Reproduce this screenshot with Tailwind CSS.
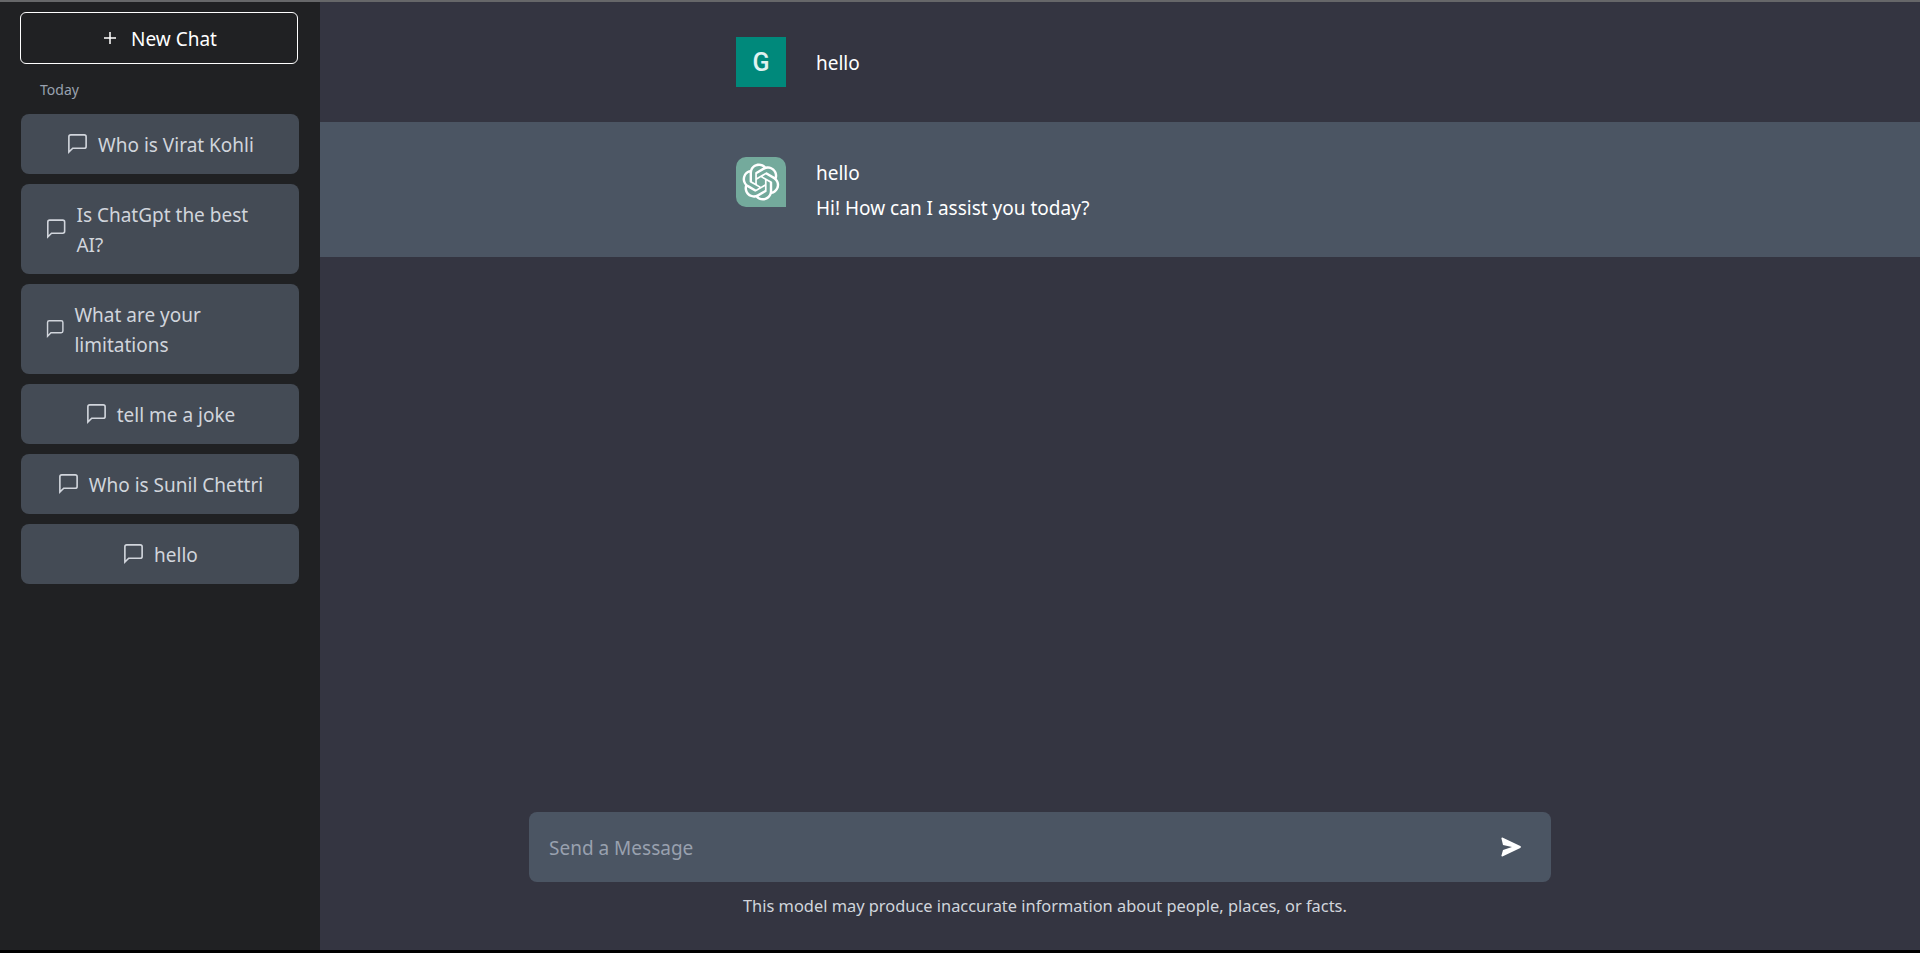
<!DOCTYPE html>
<html lang="en">
<head>
  <meta charset="UTF-8" />
  <meta name="viewport" content="width=device-width, initial-scale=1.0" />
  <title>ChatGPT Clone</title>
  <script src="https://cdn.jsdelivr.net/npm/@tailwindcss/browser@4"></script>
</head>
<body class="h-screen overflow-hidden flex flex-col bg-black font-['Noto_Sans',sans-serif] text-white">
  <div class="h-[2px] bg-[#666769]"></div>
  <div class="h-[948px] flex">
    <!-- sidebar -->
    <aside class="w-[320px] bg-[#202123] pt-[10px] pl-[20px]">
      <button class="w-[278px] h-[52px] flex items-center justify-center gap-[12px] border border-white rounded-md text-[19px]">
        <svg class="w-[18px] h-[18px]" viewBox="0 0 24 24" fill="none" stroke="currentColor" stroke-width="2"><path d="M12 4v16M4 12h16"/></svg>
        <span class="pt-[2px]">New Chat</span>
      </button>
      <p class="mt-[16px] ml-[20px] h-[20px] text-sm leading-5 text-gray-400">Today</p>
      <ul class="mt-[14px] ml-[1px] w-[278px] flex flex-col gap-[10px] text-[19px] leading-[30px] text-gray-300">
        <li class="flex items-center justify-center gap-[9px] px-[24px] pt-[16px] pb-[14px] rounded-lg bg-[#444b55]">
          <svg class="w-[23px] h-[23px] -mt-[4px]" viewBox="0 0 24 24" fill="none" stroke="currentColor" stroke-width="1.7"><path d="M21 15a2 2 0 0 1-2 2H7l-4 4V5a2 2 0 0 1 2-2h14a2 2 0 0 1 2 2z"/></svg>
          <span>Who is Virat Kohli</span>
        </li>
        <li class="flex items-center justify-center gap-[9px] px-[24px] pt-[16px] pb-[14px] rounded-lg bg-[#444b55]">
          <svg class="w-[23px] h-[23px] -mt-[4px]" viewBox="0 0 24 24" fill="none" stroke="currentColor" stroke-width="1.7"><path d="M21 15a2 2 0 0 1-2 2H7l-4 4V5a2 2 0 0 1 2-2h14a2 2 0 0 1 2 2z"/></svg>
          <span>Is ChatGpt the best AI?</span>
        </li>
        <li class="flex items-center justify-center gap-[9px] px-[24px] pt-[16px] pb-[14px] rounded-lg bg-[#444b55]">
          <svg class="w-[23px] h-[23px] -mt-[4px]" viewBox="0 0 24 24" fill="none" stroke="currentColor" stroke-width="1.7"><path d="M21 15a2 2 0 0 1-2 2H7l-4 4V5a2 2 0 0 1 2-2h14a2 2 0 0 1 2 2z"/></svg>
          <span>What are your limitations</span>
        </li>
        <li class="flex items-center justify-center gap-[9px] px-[24px] pt-[16px] pb-[14px] rounded-lg bg-[#444b55]">
          <svg class="w-[23px] h-[23px] -mt-[4px]" viewBox="0 0 24 24" fill="none" stroke="currentColor" stroke-width="1.7"><path d="M21 15a2 2 0 0 1-2 2H7l-4 4V5a2 2 0 0 1 2-2h14a2 2 0 0 1 2 2z"/></svg>
          <span>tell me a joke</span>
        </li>
        <li class="flex items-center justify-center gap-[9px] px-[24px] pt-[16px] pb-[14px] rounded-lg bg-[#444b55]">
          <svg class="w-[23px] h-[23px] -mt-[4px]" viewBox="0 0 24 24" fill="none" stroke="currentColor" stroke-width="1.7"><path d="M21 15a2 2 0 0 1-2 2H7l-4 4V5a2 2 0 0 1 2-2h14a2 2 0 0 1 2 2z"/></svg>
          <span>Who is Sunil Chettri</span>
        </li>
        <li class="flex items-center justify-center gap-[9px] px-[24px] pt-[16px] pb-[14px] rounded-lg bg-[#444b55]">
          <svg class="w-[23px] h-[23px] -mt-[4px]" viewBox="0 0 24 24" fill="none" stroke="currentColor" stroke-width="1.7"><path d="M21 15a2 2 0 0 1-2 2H7l-4 4V5a2 2 0 0 1 2-2h14a2 2 0 0 1 2 2z"/></svg>
          <span>hello</span>
        </li>
      </ul>
    </aside>

    <!-- chat -->
    <main class="flex-1 flex flex-col bg-[#343541]">
      <div class="flex-1 text-[19px] leading-[35px]">
        <div class="h-[120px] pt-[35px] pl-[416px] flex gap-[30px]">
          <div class="w-[50px] h-[50px] flex items-center justify-center bg-[#00897b] font-['Roboto',sans-serif] font-medium text-[25px] text-[#e0f2f1]">G</div>
          <p class="pt-[9px]">hello</p>
        </div>
        <div class="h-[135px] pt-[34px] pl-[416px] flex gap-[30px] bg-[#4b5563]">
          <div class="mt-[1px] w-[50px] h-[50px] flex items-center justify-center bg-[#74aa9c] rounded-l-[10px] rounded-tr-[10px]">
            <svg class="w-[38px] h-[38px]" viewBox="0 0 41 41" fill="#fff"><path d="M37.5324 16.8707C37.9808 15.5241 38.1363 14.0974 37.9886 12.6859C37.8409 11.2744 37.3934 9.91076 36.676 8.68622C35.6126 6.83404 33.9882 5.3676 32.0373 4.4985C30.0864 3.62941 27.9098 3.40259 25.8215 3.85078C24.8796 2.7893 23.7219 1.94125 22.4257 1.36341C21.1295 0.785575 19.7249 0.491269 18.3058 0.500197C16.1708 0.495044 14.0893 1.16803 12.3614 2.42214C10.6335 3.67624 9.34853 5.44666 8.6917 7.47815C7.30085 7.76286 5.98686 8.3414 4.8377 9.17505C3.68854 10.0087 2.73073 11.0782 2.02839 12.312C0.956464 14.1591 0.498905 16.2988 0.721698 18.4228C0.944492 20.5467 1.83612 22.5449 3.268 24.1293C2.81966 25.4759 2.66413 26.9026 2.81182 28.3141C2.95951 29.7256 3.40701 31.0892 4.12437 32.3138C5.18791 34.1659 6.8123 35.6322 8.76321 36.5013C10.7141 37.3704 12.8907 37.5973 14.9789 37.1492C15.9208 38.2107 17.0786 39.0587 18.3747 39.6366C19.6709 40.2144 21.0755 40.5087 22.4946 40.4998C24.6307 40.5054 26.7133 39.8321 28.4418 38.5772C30.1704 37.3223 31.4556 35.5506 32.1119 33.5179C33.5027 33.2332 34.8167 32.6547 35.9659 31.821C37.115 30.9874 38.0728 29.9178 38.7752 28.684C39.8458 26.8371 40.3023 24.6979 40.0789 22.5748C39.8556 20.4517 38.9639 18.4544 37.5324 16.8707ZM22.4978 37.8849C20.7443 37.8874 19.0459 37.2733 17.6994 36.1501C17.7601 36.117 17.8666 36.0586 17.936 36.0161L25.9004 31.4156C26.1003 31.3019 26.2663 31.137 26.3813 30.9378C26.4964 30.7386 26.5563 30.5124 26.5549 30.2825V19.0542L29.9213 20.998C29.9389 21.0068 29.9541 21.0198 29.9656 21.0359C29.977 21.052 29.9842 21.0707 29.9867 21.0902V30.3889C29.9842 32.375 29.1946 34.2791 27.7909 35.6841C26.3872 37.0892 24.4838 37.8806 22.4978 37.8849ZM6.39227 31.0064C5.51397 29.4888 5.19742 27.7107 5.49804 25.9832C5.55718 26.0187 5.66048 26.0818 5.73461 26.1244L13.699 30.7248C13.8975 30.8408 14.1233 30.902 14.3532 30.902C14.583 30.902 14.8088 30.8408 15.0073 30.7248L24.731 25.1103V28.9979C24.7321 29.0177 24.7283 29.0376 24.7199 29.0556C24.7115 29.0736 24.6988 29.0893 24.6829 29.1012L16.6317 33.7497C14.9096 34.7416 12.8643 35.0097 10.9447 34.4954C9.02506 33.9811 7.38785 32.7263 6.39227 31.0064ZM4.29707 13.6194C5.17156 12.0998 6.55279 10.9364 8.19885 10.3327C8.19885 10.4013 8.19491 10.5228 8.19491 10.6071V19.808C8.19351 20.0378 8.25334 20.2638 8.36823 20.4629C8.48312 20.6619 8.64893 20.8267 8.84863 20.9404L18.5723 26.5542L15.206 28.4979C15.1894 28.5089 15.1703 28.5155 15.1505 28.5173C15.1307 28.5191 15.1107 28.516 15.0924 28.5082L7.04046 23.8557C5.32135 22.8601 4.06716 21.2235 3.55289 19.3046C3.03862 17.3858 3.30624 15.3413 4.29707 13.6194ZM31.955 20.0556L22.2312 14.4411L25.5976 12.4981C25.6142 12.4872 25.6333 12.4805 25.6531 12.4787C25.6729 12.4769 25.6928 12.4801 25.7111 12.4879L33.7631 17.1364C34.9967 17.849 36.0017 18.8982 36.6606 20.1613C37.3194 21.4244 37.6047 22.849 37.4832 24.2684C37.3617 25.6878 36.8382 27.0432 35.9743 28.1759C35.1103 29.3086 33.9415 30.1717 32.6047 30.6641C32.6047 30.5947 32.6047 30.4733 32.6047 30.3889V21.188C32.6066 20.9586 32.5474 20.7328 32.4332 20.5338C32.319 20.3348 32.154 20.1698 31.955 20.0556ZM35.3055 15.0128C35.2464 14.9765 35.1431 14.9142 35.069 14.8717L27.1045 10.2712C26.906 10.1554 26.6803 10.0943 26.4504 10.0943C26.2206 10.0943 25.9948 10.1554 25.7963 10.2712L16.0726 15.8858V11.9982C16.0715 11.9783 16.0753 11.9585 16.0837 11.9405C16.0921 11.9225 16.1048 11.9068 16.1207 11.8949L24.1719 7.25025C25.4053 6.53903 26.8158 6.19376 28.2383 6.25482C29.6608 6.31589 31.0364 6.78077 32.2044 7.59508C33.3723 8.40939 34.2842 9.53945 34.8334 10.8531C35.3826 12.1667 35.5464 13.6095 35.3055 15.0128ZM14.2424 21.9419L10.8752 19.9981C10.8576 19.9893 10.8423 19.9763 10.8309 19.9602C10.8195 19.9441 10.8122 19.9254 10.8098 19.9058V10.6071C10.8107 9.18295 11.2173 7.78848 11.9819 6.58696C12.7466 5.38544 13.8377 4.42659 15.1275 3.82264C16.4173 3.21869 17.8524 2.99464 19.2649 3.1767C20.6775 3.35876 22.0089 3.93941 23.1034 4.85067C23.0427 4.88379 22.937 4.94215 22.8668 4.98473L14.9024 9.58517C14.7025 9.69878 14.5366 9.86356 14.4215 10.0626C14.3065 10.2616 14.2466 10.4877 14.2479 10.7175L14.2424 21.9419ZM16.071 17.9991L20.4018 15.4978L24.7325 17.9975V22.9985L20.4018 25.4983L16.071 22.9985V17.9991Z"/></svg>
          </div>
          <div>
            <p>hello</p>
            <p>Hi! How can I assist you today?</p>
          </div>
        </div>
      </div>

      <div class="ml-[209px] w-[1022px] h-[70px] flex items-center pl-[20px] pr-[30px] rounded-lg bg-[#4b5563]">
        <input type="text" placeholder="Send a Message" class="flex-1 pt-[2px] bg-transparent text-[19px] outline-none placeholder:text-gray-400" />
        <svg class="w-[20px] h-[20px] -mt-[1px]" viewBox="0 0 20 20" fill="#fff"><path d="M1.4.6 19.3 9.1a1 1 0 0 1 0 1.8L1.4 19.4a.7.7 0 0 1-1-.7L2 13 11 10 2 8 .4 1.3a.7.7 0 0 1 1-.7z"/></svg>
      </div>
      <p class="ml-[423px] mt-[12px] mb-[33px] text-[16.4px] leading-[23px] text-gray-300">This model may produce inaccurate information about people, places, or facts.</p>
    </main>
  </div>
</body>
</html>
